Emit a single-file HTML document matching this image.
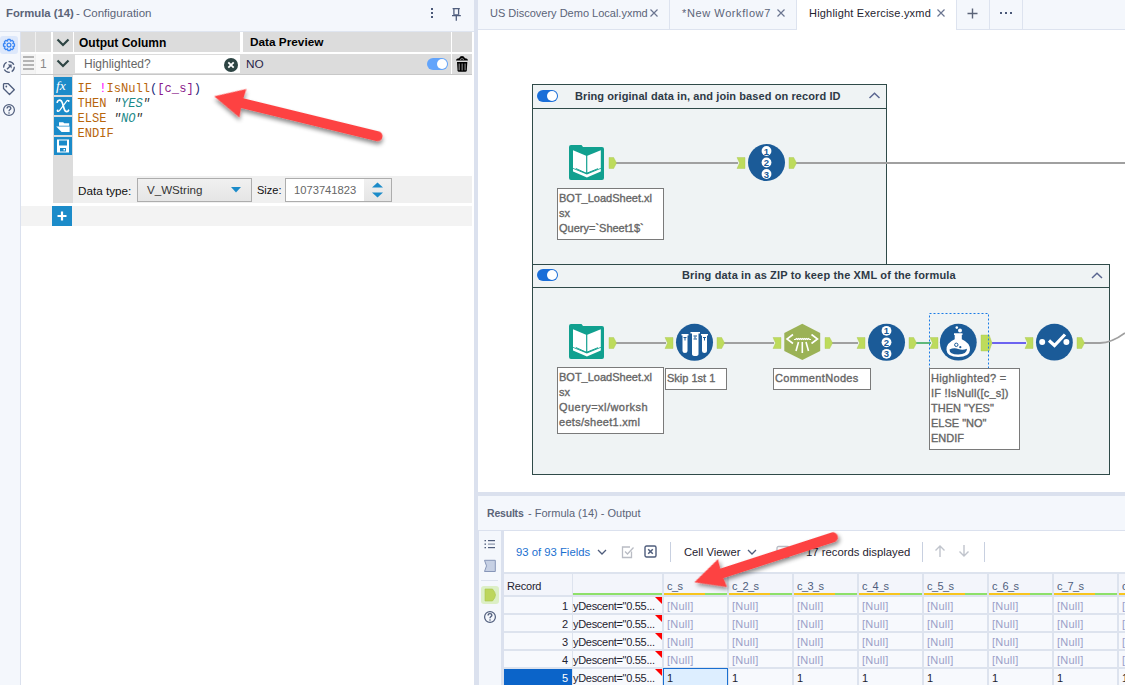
<!DOCTYPE html>
<html><head><meta charset="utf-8">
<style>
*{margin:0;padding:0;box-sizing:border-box}
html,body{width:1125px;height:685px;overflow:hidden;background:#fff}
body{position:relative;font-family:"Liberation Sans",sans-serif;color:#222}
.a{position:absolute}
.t{position:absolute;white-space:nowrap;line-height:1}
</style></head><body>
<div class="a" style="left:0px;top:0px;width:474px;height:685px;background:#f4f7fc;"></div>
<div class="t" style="left:6px;top:8px;font-size:11.3px;font-weight:bold;color:#5b6478;">Formula (14)</div>
<div class="t" style="left:76px;top:8px;font-size:11.5px;color:#5b6478;">- Configuration</div>
<div class="a" style="left:0px;top:31px;width:474px;height:1px;background:#dfe5f0;"></div>
<div class="a" style="left:20px;top:32px;width:1px;height:653px;background:#dbe1ee;"></div>
<div class="a" style="left:21px;top:32px;width:453px;height:653px;background:#fff;"></div>
<div class="a" style="left:431px;top:8px;width:2px;height:2px;background:#4a5878;"></div>
<div class="a" style="left:431px;top:12px;width:2px;height:2px;background:#4a5878;"></div>
<div class="a" style="left:431px;top:16px;width:2px;height:2px;background:#4a5878;"></div>
<svg class="a" style="left:450px;top:6px" width="14" height="16" viewBox="0 0 14 16"><g fill="none" stroke="#4f5d7c" stroke-width="1.3"><path d="M2.6 2.7H9.8M3.9 2.7V8.6M8.6 2.7V8.6M2 9.6H10.8M6.3 9.6V14.8"/></g><path d="M3.9 8.3L2 9.7H10.8L8.6 8.3Z" fill="#4f5d7c"/></svg>
<div class="a" style="left:0px;top:36px;width:18px;height:18px;background:#dde8fb;border-radius:3px"></div>
<svg class="a" style="left:2px;top:38px" width="14" height="14" viewBox="0 0 14 14"><path d="M10.83 5.29 L12.49 5.89 L12.49 8.11 L10.83 8.71 L10.92 8.50 L11.67 10.09 L10.09 11.67 L8.50 10.92 L8.71 10.83 L8.11 12.49 L5.89 12.49 L5.29 10.83 L5.50 10.92 L3.91 11.67 L2.33 10.09 L3.08 8.50 L3.17 8.71 L1.51 8.11 L1.51 5.89 L3.17 5.29 L3.08 5.50 L2.33 3.91 L3.91 2.33 L5.50 3.08 L5.29 3.17 L5.89 1.51 L8.11 1.51 L8.71 3.17 L8.50 3.08 L10.09 2.33 L11.67 3.91 L10.92 5.50Z" fill="none" stroke="#3a86f4" stroke-width="1.3" stroke-linejoin="round"/><circle cx="7" cy="7" r="1.9" fill="none" stroke="#3a86f4" stroke-width="1.3"/></svg>
<svg class="a" style="left:2px;top:60px" width="14" height="14" viewBox="0 0 14 14"><circle cx="7" cy="7" r="5.3" fill="none" stroke="#4f5d7c" stroke-width="1.3" stroke-dasharray="6.3 2" stroke-dashoffset="1"/><path d="M5 9.2L8.8 5.4" stroke="#4f5d7c" stroke-width="1.4"/><path d="M5.8 4.6H9.6V8.4Z" fill="#4f5d7c"/></svg>
<svg class="a" style="left:2px;top:82px" width="14" height="14" viewBox="0 0 14 14"><path d="M1.5 2.2V6.5L7.5 12.5L12.3 7.7L6.3 1.7H2Z" fill="none" stroke="#4f5d7c" stroke-width="1.3" stroke-linejoin="round"/><circle cx="4.3" cy="4.5" r="0.9" fill="#4f5d7c"/></svg>
<svg class="a" style="left:2px;top:103px" width="14" height="14" viewBox="0 0 14 14"><circle cx="7" cy="7" r="5.4" fill="none" stroke="#4f5d7c" stroke-width="1.2"/><path d="M5.1 5.4C5.1 4.2 6 3.6 7 3.6S8.9 4.2 8.9 5.3C8.9 6.5 7 6.7 7 8.2" fill="none" stroke="#4f5d7c" stroke-width="1.3"/><circle cx="7" cy="10" r="0.8" fill="#4f5d7c"/></svg>
<div class="a" style="left:21px;top:32px;width:451px;height:20px;background:#dcdcdc;"></div>
<svg class="a" style="left:55px;top:36px" width="16" height="12" viewBox="0 0 16 12"><path d="M2.5 3.5L8 9L13.5 3.5" fill="none" stroke="#2d4443" stroke-width="2.2"/></svg>
<div class="t" style="left:79px;top:37px;font-size:12px;font-weight:bold;color:#000;">Output Column</div>
<div class="t" style="left:250px;top:37px;font-size:11.8px;font-weight:bold;color:#000;">Data Preview</div>
<div class="a" style="left:21px;top:54px;width:451px;height:20px;background:#dcdcdc;"></div>
<div class="a" style="left:21px;top:74px;width:451px;height:1px;background:#c8c8c8;"></div>
<div class="a" style="left:21px;top:54px;width:14px;height:20px;background:#f4f4f4;"></div>
<div class="a" style="left:36px;top:54px;width:15px;height:20px;background:#f9f9f9;"></div>
<div class="a" style="left:35px;top:32px;width:1px;height:42px;background:#f0f0f0;"></div>
<div class="a" style="left:51px;top:32px;width:2px;height:42px;background:#fff;"></div>
<div class="a" style="left:73px;top:32px;width:1px;height:20px;background:#fff;"></div>
<div class="a" style="left:240px;top:32px;width:3px;height:20px;background:#fff;"></div>
<div class="a" style="left:451px;top:32px;width:1px;height:42px;background:#fff;"></div>
<div class="a" style="left:21px;top:52px;width:451px;height:2px;background:#fff;"></div>
<div class="a" style="left:23px;top:56px;width:11px;height:2px;background:#b4b4b4;"></div>
<div class="a" style="left:23px;top:60px;width:11px;height:2px;background:#b4b4b4;"></div>
<div class="a" style="left:23px;top:64px;width:11px;height:2px;background:#b4b4b4;"></div>
<div class="a" style="left:23px;top:68px;width:11px;height:2px;background:#b4b4b4;"></div>
<div class="t" style="left:40px;top:58px;font-size:12px;color:#888;">1</div>
<svg class="a" style="left:55px;top:57px" width="16" height="12" viewBox="0 0 16 12"><path d="M2.5 3.5L8 9L13.5 3.5" fill="none" stroke="#2d4443" stroke-width="2.2"/></svg>
<div class="a" style="left:75px;top:55px;width:165px;height:18px;background:#fff;"></div>
<div class="t" style="left:84px;top:58px;font-size:12px;color:#666;">Highlighted?</div>
<svg class="a" style="left:223px;top:57px" width="16" height="16" viewBox="0 0 16 16"><circle cx="8" cy="8" r="7" fill="#2d4443"/><path d="M5.3 5.3L10.7 10.7M10.7 5.3L5.3 10.7" stroke="#fff" stroke-width="1.8"/></svg>
<div class="t" style="left:246px;top:59px;font-size:11.8px;color:#2a1f4a;">NO</div>
<div class="a" style="left:427px;top:58px;width:21px;height:12px;background:#62a4fb;border-radius:6px"></div>
<div class="a" style="left:437px;top:59px;width:10px;height:10px;background:#fff;border-radius:50%"></div>
<svg class="a" style="left:455px;top:55px" width="14" height="18" viewBox="0 0 14 18"><path d="M1 5.6Q1 3.6 4 3.2Q5 1 7 1Q9 1 10 3.2Q13 3.6 13 5.6Z" fill="#000"/><path d="M5 4.6Q7 2.4 9 4.6" fill="none" stroke="#8a8a8a" stroke-width="1"/><path d="M2 7H12.3L11.8 15.6Q11.6 16.8 10.4 16.8H3.9Q2.7 16.8 2.5 15.6Z" fill="#000"/><path d="M4.2 8.5V15.2M7.15 8.5V15.5M10.1 8.5V15.2" stroke="#8a8a8a" stroke-width="1.1"/></svg>
<div class="a" style="left:53px;top:75px;width:20px;height:128px;background:#dcdcdc;"></div>
<div class="a" style="left:54px;top:77px;width:18px;height:18px;background:#1b8bc9;"></div>
<div class="a" style="left:54px;top:97px;width:18px;height:18px;background:#1b8bc9;"></div>
<div class="a" style="left:54px;top:117px;width:18px;height:18px;background:#1b8bc9;"></div>
<div class="a" style="left:54px;top:137px;width:18px;height:18px;background:#1b8bc9;"></div>
<div class="t" style="left:56px;top:79px;font-size:13.5px;color:#fff;font-family:'Liberation Serif',serif;font-style:italic">fx</div>
<svg class="a" style="left:54px;top:97px" width="18" height="18" viewBox="0 0 18 18"><path d="M3.2 5.2Q3.8 3 6 3.2Q7.6 3.5 8.4 6L10.3 12.2Q11 14.6 12.8 14.6Q14.2 14.5 14.6 13.2" fill="none" stroke="#fff" stroke-width="1.7" stroke-linecap="round"/><path d="M14.8 3.8Q13.8 3 12.8 3.8L5.5 13.6Q4.6 14.8 3.4 14.2" fill="none" stroke="#fff" stroke-width="1.2" stroke-linecap="round"/><circle cx="3.6" cy="13.6" r="1" fill="#fff"/><circle cx="14.6" cy="4" r="0.9" fill="#fff"/></svg>
<svg class="a" style="left:54px;top:117px" width="18" height="18" viewBox="0 0 18 18"><path d="M5 8.8V5.2H9.2L10.2 6.3H15.2V8.8Z" fill="#fff"/><path d="M2.2 9.6H15.6V15H7.6Z" fill="#fff"/></svg>
<svg class="a" style="left:54px;top:137px" width="18" height="18" viewBox="0 0 18 18"><path d="M3 2.5H15V15.5H3Z" fill="#fff"/><path d="M5 3.5H13V8.5H5Z" fill="#1b8bc9"/><path d="M6 11H12V14.5H6Z" fill="#1b8bc9"/><path d="M9.5 12H11V13.5H9.5Z" fill="#fff"/></svg>
<div class="t" style="left:77.5px;top:82px;font-family:'Liberation Mono',monospace;font-size:12.1px;line-height:15px;color:#b8650b">IF <span style="color:#f0f">!</span>IsNull<span style="color:#1c2a7c">(</span><span style="color:#8a1a8a">[c_s]</span><span style="color:#1c2a7c">)</span><br>THEN <i style="color:#1a8a8a"><span style="color:#333">"</span>YES<span style="color:#333">"</span></i><br>ELSE <i style="color:#1a8a8a"><span style="color:#333">"</span>NO<span style="color:#333">"</span></i><br>ENDIF</div>
<div class="a" style="left:73px;top:176px;width:399px;height:27px;background:#f0f0f0;"></div>
<div class="t" style="left:78px;top:185px;font-size:11.7px;color:#111;">Data type:</div>
<div class="a" style="left:137px;top:178px;width:115px;height:24px;background:linear-gradient(#f0f0f0,#e5e5e5);border:1px solid #adadad"></div>
<div class="t" style="left:147px;top:184px;font-size:11.6px;color:#333;">V_WString</div>
<svg class="a" style="left:231px;top:187px" width="10" height="6" viewBox="0 0 10 6"><path d="M0 0H10L5 5.5Z" fill="#1b8bc9"/></svg>
<div class="t" style="left:257px;top:185px;font-size:11px;color:#111;">Size:</div>
<div class="a" style="left:285px;top:178px;width:107px;height:24px;background:#fff;border:1px solid #adadad"></div>
<div class="a" style="left:364px;top:179px;width:27px;height:22px;background:linear-gradient(#f0f0f0,#e5e5e5);"></div>
<div class="t" style="left:294px;top:185px;font-size:11.2px;color:#666;">1073741823</div>
<svg class="a" style="left:371px;top:181px" width="13" height="18" viewBox="0 0 13 18"><path d="M6.5 1.5L12 6.5H1Z" fill="#1b8bc9"/><path d="M1 11.5H12L6.5 16.5Z" fill="#1b8bc9"/></svg>
<div class="a" style="left:21px;top:206px;width:451px;height:20px;background:#f3f3f3;"></div>
<div class="a" style="left:52px;top:206px;width:20px;height:20px;background:#1b8bc9;"></div>
<svg class="a" style="left:52px;top:206px" width="20" height="20" viewBox="0 0 20 20"><path d="M10 5.5V14.5M5.5 10H14.5" stroke="#fff" stroke-width="2.2"/></svg>
<div class="a" style="left:474px;top:0px;width:4px;height:685px;background:#dbe1ee;"></div>
<div class="a" style="left:478px;top:0px;width:647px;height:29px;background:#f4f7fc;"></div>
<div class="a" style="left:478px;top:29px;width:647px;height:1px;background:#dde3ef;"></div>
<div class="a" style="left:669px;top:0px;width:1px;height:29px;background:#dde3ef;"></div>
<div class="a" style="left:796px;top:0px;width:161px;height:30px;background:#fff;border-left:1px solid #dde3ef;border-right:1px solid #dde3ef"></div>
<div class="a" style="left:989px;top:0px;width:1px;height:29px;background:#dde3ef;"></div>
<div class="a" style="left:1022px;top:0px;width:1px;height:29px;background:#dde3ef;"></div>
<div class="t" style="left:490px;top:8px;font-size:11px;color:#5b6478;">US Discovery Demo Local.yxmd</div>
<div class="t" style="left:682px;top:8px;font-size:11px;letter-spacing:0.6px;color:#5b6478;">*New Workflow7</div>
<div class="t" style="left:809px;top:8px;font-size:11px;letter-spacing:0.2px;color:#1f2330;">Highlight Exercise.yxmd</div>
<svg class="a" style="left:650px;top:9px" width="8" height="8" viewBox="0 0 8 8"><path d="M0.5 0.5L7.5 7.5M7.5 0.5L0.5 7.5" stroke="#6a7590" stroke-width="1.2"/></svg>
<svg class="a" style="left:777px;top:9px" width="8" height="8" viewBox="0 0 8 8"><path d="M0.5 0.5L7.5 7.5M7.5 0.5L0.5 7.5" stroke="#6a7590" stroke-width="1.2"/></svg>
<svg class="a" style="left:937px;top:9px" width="8" height="8" viewBox="0 0 8 8"><path d="M0.5 0.5L7.5 7.5M7.5 0.5L0.5 7.5" stroke="#6a7590" stroke-width="1.2"/></svg>
<svg class="a" style="left:967px;top:8px" width="11" height="11" viewBox="0 0 11 11"><path d="M5.5 0.5V10.5M0.5 5.5H10.5" stroke="#5b6478" stroke-width="1.4"/></svg>
<div class="a" style="left:1000px;top:12px;width:2px;height:2px;background:#4a5878;"></div>
<div class="a" style="left:1005px;top:12px;width:2px;height:2px;background:#4a5878;"></div>
<div class="a" style="left:1010px;top:12px;width:2px;height:2px;background:#4a5878;"></div>
<div class="a" style="left:478px;top:30px;width:647px;height:462px;background:#fff;"></div>
<svg class="a" style="left:0;top:0" width="1125" height="685" viewBox="0 0 1125 685"><rect x="532.5" y="84.5" width="354" height="180" fill="#eff3f4" stroke="#2f4a48" stroke-width="1"/>
<path d="M532 108.5H887" stroke="#2f4a48" stroke-width="1"/>
<rect x="532.5" y="264.5" width="577" height="210" fill="#eff3f4" stroke="#2f4a48" stroke-width="1"/>
<path d="M532 287.5H1110" stroke="#2f4a48" stroke-width="1"/>
<path d="M869.5 98L874.5 93.3L879.5 98" fill="none" stroke="#5a6690" stroke-width="1.5"/>
<path d="M1092 278L1097 273.3L1102 278" fill="none" stroke="#5a6690" stroke-width="1.5"/>
<rect x="537" y="90" width="21" height="12" rx="6" fill="#1a6ed8"/>
<circle cx="552" cy="96" r="5" fill="#fff"/>
<rect x="537" y="269" width="21" height="12" rx="6" fill="#1a6ed8"/>
<circle cx="552" cy="275" r="5" fill="#fff"/>
<path d="M616 163H738" stroke="#a0a0a0" stroke-width="2"/>
<path d="M796 163H1125" stroke="#a0a0a0" stroke-width="2"/>
<path d="M616 343H666" stroke="#a0a0a0" stroke-width="2"/>
<path d="M724 343H774" stroke="#a0a0a0" stroke-width="2"/>
<path d="M832 343H858" stroke="#a0a0a0" stroke-width="2"/>
<path d="M916 343H931" stroke="#5fb87a" stroke-width="2"/>
<path d="M992 343H1026" stroke="#6c63f0" stroke-width="2.2"/>
<path d="M1084 343H1100C1110 343 1117 339 1125 333" fill="none" stroke="#a0a0a0" stroke-width="1.8"/>
<path d="M609 157.5H613.7L616.5 163.0L613.7 168.5H609Z" fill="#bddb5c" stroke="#a8c64c" stroke-width="0.4"/>
<path d="M737 157.5H745V168.5H737L739.5 163.0Z" fill="#bddb5c" stroke="#a8c64c" stroke-width="0.4"/>
<path d="M789 157.5H793.7L796.5 163.0L793.7 168.5H789Z" fill="#bddb5c" stroke="#a8c64c" stroke-width="0.4"/>
<path d="M609 337.5H613.7L616.5 343.0L613.7 348.5H609Z" fill="#bddb5c" stroke="#a8c64c" stroke-width="0.4"/>
<path d="M665 337.5H673V348.5H665L667.5 343.0Z" fill="#bddb5c" stroke="#a8c64c" stroke-width="0.4"/>
<path d="M717 337.5H721.7L724.5 343.0L721.7 348.5H717Z" fill="#bddb5c" stroke="#a8c64c" stroke-width="0.4"/>
<path d="M773 337.5H781V348.5H773L775.5 343.0Z" fill="#bddb5c" stroke="#a8c64c" stroke-width="0.4"/>
<path d="M825 337.5H829.7L832.5 343.0L829.7 348.5H825Z" fill="#bddb5c" stroke="#a8c64c" stroke-width="0.4"/>
<path d="M857 337.5H865V348.5H857L859.5 343.0Z" fill="#bddb5c" stroke="#a8c64c" stroke-width="0.4"/>
<path d="M909 337.5H913.7L916.5 343.0L913.7 348.5H909Z" fill="#bddb5c" stroke="#a8c64c" stroke-width="0.4"/>
<path d="M930 337.5H938V348.5H930L932.5 343.0Z" fill="#bddb5c" stroke="#a8c64c" stroke-width="0.4"/>
<path d="M981 335H989.2L992 343.0L989.2 351H981Z" fill="#bddb5c" stroke="#a8c64c" stroke-width="0.4"/>
<path d="M1025 337.5H1033V348.5H1025L1027.5 343.0Z" fill="#bddb5c" stroke="#a8c64c" stroke-width="0.4"/>
<path d="M1077 337.5H1081.7L1084.5 343.0L1081.7 348.5H1077Z" fill="#bddb5c" stroke="#a8c64c" stroke-width="0.4"/>
<g transform="translate(569,145)"><path d="M0 2Q0 0 2 0H12.5L14 2H33Q35 2 35 4V33Q35 35 33 35H2Q0 35 0 33Z" fill="#11a08f"/>
<path d="M4 5.2L17.1 10.8V28L4 23Z" fill="#fff"/><path d="M18.3 10.8L31.8 5.2V23L18.3 28Z" fill="#fff"/>
<path d="M4 26.6L17.9 32.4L31.8 26.6V23.8L17.9 29.6L4 23.8Z" fill="#fff"/>
<path d="M6.8 23.5L17.5 28.3L29 23.7" fill="none" stroke="#11a08f" stroke-width="1"/></g>
<g transform="translate(569,324)"><path d="M0 2Q0 0 2 0H12.5L14 2H33Q35 2 35 4V33Q35 35 33 35H2Q0 35 0 33Z" fill="#11a08f"/>
<path d="M4 5.2L17.1 10.8V28L4 23Z" fill="#fff"/><path d="M18.3 10.8L31.8 5.2V23L18.3 28Z" fill="#fff"/>
<path d="M4 26.6L17.9 32.4L31.8 26.6V23.8L17.9 29.6L4 23.8Z" fill="#fff"/>
<path d="M6.8 23.5L17.5 28.3L29 23.7" fill="none" stroke="#11a08f" stroke-width="1"/></g>
<circle cx="766.5" cy="162.5" r="18.5" fill="#1b5b98"/><circle cx="766.5" cy="151.0" r="4.9" fill="#fff"/><text x="766.5" y="154.5" font-family="Liberation Sans" font-size="9.5" font-weight="bold" fill="#1b5b98" text-anchor="middle">1</text><circle cx="766.5" cy="162.5" r="4.9" fill="#fff"/><text x="766.5" y="166.0" font-family="Liberation Sans" font-size="9.5" font-weight="bold" fill="#1b5b98" text-anchor="middle">2</text><circle cx="766.5" cy="174.0" r="4.9" fill="#fff"/><text x="766.5" y="177.5" font-family="Liberation Sans" font-size="9.5" font-weight="bold" fill="#1b5b98" text-anchor="middle">3</text>
<circle cx="886.5" cy="342.3" r="18.5" fill="#1b5b98"/><circle cx="886.5" cy="330.8" r="4.9" fill="#fff"/><text x="886.5" y="334.3" font-family="Liberation Sans" font-size="9.5" font-weight="bold" fill="#1b5b98" text-anchor="middle">1</text><circle cx="886.5" cy="342.3" r="4.9" fill="#fff"/><text x="886.5" y="345.8" font-family="Liberation Sans" font-size="9.5" font-weight="bold" fill="#1b5b98" text-anchor="middle">2</text><circle cx="886.5" cy="353.8" r="4.9" fill="#fff"/><text x="886.5" y="357.3" font-family="Liberation Sans" font-size="9.5" font-weight="bold" fill="#1b5b98" text-anchor="middle">3</text>
<circle cx="694.5" cy="342.3" r="18.5" fill="#1b5b98"/>
<g fill="#fff"><path d="M681.5 334H688.5V335.5H687.5V351Q687.5 353 685 353Q682.5 353 682.5 351V335.5H681.5Z"/>
<path d="M690.5 332H700V333.5H698.5V354Q698.5 356 695.3 356Q692 356 692 354V333.5H690.5Z"/>
<path d="M701 334H708V335.5H707V351Q707 353 704.5 353Q702 353 702 351V335.5H701Z"/></g>
<g fill="#1b5b98"><rect x="683.5" y="337" width="3" height="1"/><rect x="684.5" y="338" width="1" height="2.5"/><rect x="693.5" y="335.5" width="3.5" height="1"/><rect x="694.5" y="336.5" width="1" height="2"/><rect x="693.5" y="338.5" width="3.5" height="1"/><rect x="703" y="337" width="3" height="1"/><rect x="704" y="338" width="1" height="2.5"/></g>
<path d="M802.3 323.7L820.2 333V351L802.3 360L784.3 351V333Z" fill="#9bb256"/>
<g fill="none" stroke="#fff" stroke-width="1.6"><path d="M793 334.5L787 339L793 343.5M811.5 334.5L817.5 339L811.5 343.5"/>
<path d="M798.5 342L796 351M802.3 342V353M806 342L808.5 351"/></g>
<path d="M794 339.5h1.5l1 -1 1 1 1 -1 1 1 1 -1 1 1 1 -1 1 1 1 -1 1 1 1 -1 1 1 1 -1 1 1h1.5" fill="none" stroke="#fff" stroke-width="1.2"/>
<circle cx="958.3" cy="342.2" r="18.4" fill="#1b5b98"/>
<path d="M954 333.2H962.5V335H961.8V339.2Q970.5 343 970 350Q969.5 357 958.2 357Q947 357 946.5 350Q946 343 954.7 339.2V335H954Z" fill="#fff"/>
<path d="M949.5 349.5Q954 347.5 958.2 349Q962.5 350.5 967 348.8Q967 354.5 958.2 354.5Q949.3 354.5 949.5 349.5Z" fill="#1b5b98"/>
<circle cx="956.3" cy="344.8" r="1.7" fill="none" stroke="#1b5b98" stroke-width="1"/><circle cx="960.3" cy="347.2" r="1.1" fill="#1b5b98"/>
<circle cx="960" cy="330.5" r="2" fill="#fff"/><circle cx="956.8" cy="327.6" r="1.3" fill="#fff"/>
<circle cx="1054.4" cy="342.2" r="18.4" fill="#1b5b98"/>
<circle cx="1042.2" cy="342" r="3" fill="#fff"/><circle cx="1066.4" cy="342" r="3" fill="#fff"/>
<path d="M1049 340.5L1054.5 345.5L1065 334.5" fill="none" stroke="#fff" stroke-width="3.2"/>
<rect x="929.5" y="313.5" width="59" height="55" fill="none" stroke="#1a7be6" stroke-width="1" stroke-dasharray="2 2"/></svg>
<div class="t" style="left:575px;top:91px;font-size:11px;font-weight:bold;letter-spacing:0.09px;color:#2e3a46;">Bring original data in, and join based on record ID</div>
<div class="t" style="left:682px;top:270px;font-size:11px;font-weight:bold;letter-spacing:0.15px;color:#2e3a46;">Bring data in as ZIP to keep the XML of the formula</div>
<div class="a" style="left:557px;top:188px;width:107px;height:52px;background:#fff;border:1px solid #7a7a7a"></div><div class="t" style="left:559px;top:191px;font-size:11px;line-height:15px;color:#666;-webkit-text-stroke:0.35px #666">BOT_LoadSheet.xl<br>sx<br>Query=`Sheet1$`</div>
<div class="a" style="left:557px;top:367px;width:107px;height:67px;background:#fff;border:1px solid #7a7a7a"></div><div class="t" style="left:559px;top:370px;font-size:11px;line-height:15px;color:#666;-webkit-text-stroke:0.35px #666">BOT_LoadSheet.xl<br>sx<br><span style="letter-spacing:0.45px">Query=xl/worksh</span><br><span style="letter-spacing:0.28px">eets/sheet1.xml</span></div>
<div class="a" style="left:665px;top:368px;width:62px;height:22px;background:#fff;border:1px solid #7a7a7a"></div><div class="t" style="left:667px;top:371px;font-size:11px;line-height:15px;color:#666;-webkit-text-stroke:0.35px #666">Skip 1st 1</div>
<div class="a" style="left:773px;top:368px;width:98px;height:22px;background:#fff;border:1px solid #7a7a7a"></div><div class="t" style="left:775px;top:371px;font-size:11px;line-height:15px;color:#666;-webkit-text-stroke:0.35px #666"><span style="letter-spacing:0.35px">CommentNodes</span></div>
<div class="a" style="left:929px;top:368px;width:91px;height:82px;background:#fff;border:1px solid #7a7a7a"></div><div class="t" style="left:931px;top:371px;font-size:11px;line-height:15px;color:#666;-webkit-text-stroke:0.35px #666"><span style="letter-spacing:0.35px">Highlighted? =</span><br><span style="letter-spacing:0.22px">IF !IsNull([c_s])</span><br>THEN "YES"<br>ELSE "NO"<br>ENDIF</div>
<div class="a" style="left:478px;top:492px;width:647px;height:4px;background:#dbe1ee;"></div>
<div class="a" style="left:478px;top:496px;width:647px;height:35px;background:#f4f7fc;"></div>
<div class="a" style="left:478px;top:530px;width:647px;height:1px;background:#dbe1ee;"></div>
<div class="t" style="left:487px;top:508px;font-size:10.5px;font-weight:bold;letter-spacing:-0.2px;color:#5b6478;">Results</div>
<div class="t" style="left:528px;top:508px;font-size:11px;color:#5b6478;">- Formula (14) - Output</div>
<div class="a" style="left:478px;top:531px;width:23px;height:154px;background:#f4f7fc;"></div>
<div class="a" style="left:478px;top:531px;width:1px;height:154px;background:#dbe1ee;"></div>
<div class="a" style="left:501px;top:531px;width:3px;height:154px;background:#dbe1ee;"></div>
<svg class="a" style="left:483px;top:537px" width="14" height="14" viewBox="0 0 14 14"><g fill="#4f5d7c"><rect x="1.5" y="3" width="1.5" height="1.3"/><rect x="1.5" y="6.5" width="1.5" height="1.3"/><rect x="1.5" y="10" width="1.5" height="1.3"/><rect x="5" y="3" width="7" height="1.2"/><rect x="5" y="6.5" width="7" height="1.2" fill="#8a94aa"/><rect x="5" y="10" width="7" height="1.2"/></g></svg>
<svg class="a" style="left:483px;top:559px" width="14" height="14" viewBox="0 0 14 14"><path d="M1.5 1.3H12.3V12.5H1.5L3.5 6.9Z" fill="#c6d0e4" stroke="#8796b8" stroke-width="1"/></svg>
<div class="a" style="left:481px;top:580px;width:17px;height:1px;background:#dde3ee;"></div>
<div class="a" style="left:481px;top:586px;width:18px;height:18px;background:#dcefc6;border-radius:3px"></div>
<svg class="a" style="left:484px;top:588px" width="13" height="14" viewBox="0 0 13 14"><path d="M1 1H8.5Q11.5 4.5 11.5 7Q11.5 9.5 8.5 13H1Z" fill="#bcd65c" stroke="#a9c44a" stroke-width="0.6"/></svg>
<svg class="a" style="left:483px;top:610px" width="14" height="14" viewBox="0 0 14 14"><circle cx="7" cy="7" r="5.4" fill="none" stroke="#4f5d7c" stroke-width="1.2"/><path d="M5.1 5.4C5.1 4.2 6 3.6 7 3.6S8.9 4.2 8.9 5.3C8.9 6.5 7 6.7 7 8.2" fill="none" stroke="#4f5d7c" stroke-width="1.3"/><circle cx="7" cy="10" r="0.8" fill="#4f5d7c"/></svg>
<div class="a" style="left:504px;top:531px;width:621px;height:41px;background:#fff;"></div>
<div class="a" style="left:504px;top:572px;width:621px;height:2px;background:#dde3ee;"></div>
<div class="t" style="left:516px;top:547px;font-size:11.3px;color:#1a6fd0;">93 of 93 Fields</div>
<svg class="a" style="left:597px;top:548px" width="10" height="8" viewBox="0 0 10 8"><path d="M1 2L5 6L9 2" fill="none" stroke="#4f5d7c" stroke-width="1.3"/></svg>
<svg class="a" style="left:621px;top:545px" width="14" height="14" viewBox="0 0 14 14"><path d="M10.5 6.5V12.5H1.5V2H9" fill="none" stroke="#b9bcc4" stroke-width="1.3"/><path d="M4 6.5L6.5 9L12.5 2.5" fill="none" stroke="#b9bcc4" stroke-width="1.3"/></svg>
<svg class="a" style="left:644px;top:545px" width="13" height="13" viewBox="0 0 13 13"><rect x="1" y="1" width="11" height="11" rx="1.5" fill="none" stroke="#4f5d7c" stroke-width="1.4"/><path d="M4.2 4.2L8.8 8.8M8.8 4.2L4.2 8.8" stroke="#4f5d7c" stroke-width="1.5"/></svg>
<div class="a" style="left:670px;top:542px;width:1px;height:20px;background:#c8d0e0;"></div>
<div class="t" style="left:684px;top:547px;font-size:11.2px;color:#1f2330;">Cell Viewer</div>
<svg class="a" style="left:747px;top:548px" width="10" height="8" viewBox="0 0 10 8"><path d="M1 2L5 6L9 2" fill="none" stroke="#4f5d7c" stroke-width="1.3"/></svg>
<svg class="a" style="left:776px;top:545px" width="14" height="14" viewBox="0 0 14 14"><rect x="1" y="1.5" width="12" height="11" rx="1.5" fill="none" stroke="#b9bcc4" stroke-width="1.3"/></svg>
<div class="t" style="left:806px;top:547px;font-size:11.3px;color:#1f2330;">17 records displayed</div>
<div class="a" style="left:922px;top:542px;width:1px;height:20px;background:#c8d0e0;"></div>
<svg class="a" style="left:934px;top:544px" width="12" height="14" viewBox="0 0 12 14"><path d="M6 13V2M1.5 6.5L6 2L10.5 6.5" fill="none" stroke="#c0c4cc" stroke-width="1.4"/></svg>
<svg class="a" style="left:958px;top:544px" width="12" height="14" viewBox="0 0 12 14"><path d="M6 1V12M1.5 7.5L6 12L10.5 7.5" fill="none" stroke="#c0c4cc" stroke-width="1.4"/></svg>
<div class="a" style="left:984px;top:542px;width:1px;height:20px;background:#c8d0e0;"></div>
<div class="a" style="left:504px;top:574px;width:621px;height:111px;background:#dde3ee;"></div>
<div class="a" style="left:504px;top:574px;width:68px;height:19px;background:#f3f5fb;"></div>
<div class="a" style="left:504px;top:593px;width:68px;height:2px;background:#f3f5fb;"></div>
<div class="t" style="left:507px;top:581px;font-size:11px;letter-spacing:-0.2px;color:#1f2330;">Record</div>
<div class="a" style="left:504px;top:597px;width:68px;height:16px;background:#f7f9fd;"></div>
<div class="t" style="left:504px;width:64px;text-align:right;top:601px;font-size:11px;color:#1f2330">1</div>
<div class="a" style="left:504px;top:615px;width:68px;height:16px;background:#f7f9fd;"></div>
<div class="t" style="left:504px;width:64px;text-align:right;top:619px;font-size:11px;color:#1f2330">2</div>
<div class="a" style="left:504px;top:633px;width:68px;height:16px;background:#f7f9fd;"></div>
<div class="t" style="left:504px;width:64px;text-align:right;top:637px;font-size:11px;color:#1f2330">3</div>
<div class="a" style="left:504px;top:651px;width:68px;height:16px;background:#f7f9fd;"></div>
<div class="t" style="left:504px;width:64px;text-align:right;top:655px;font-size:11px;color:#1f2330">4</div>
<div class="a" style="left:504px;top:669px;width:68px;height:18px;background:#0b64c9;"></div>
<div class="t" style="left:504px;width:64px;text-align:right;top:673px;font-size:11px;color:#fff">5</div>
<div class="a" style="left:573px;top:574px;width:89px;height:19px;background:#f3f5fb;"></div>
<div class="a" style="left:573px;top:593px;width:89px;height:2px;background:#8ee06a;"></div>
<div class="a" style="left:573px;top:597px;width:89px;height:16px;background:#f7f9fd;"></div>
<div class="t" style="left:573px;top:601px;font-size:11px;letter-spacing:-0.3px;color:#1f2330;">yDescent="0.55...</div>
<svg class="a" style="left:655px;top:597px" width="7" height="7" viewBox="0 0 7 7"><path d="M0 0H7V7Z" fill="#f00"/></svg>
<div class="a" style="left:573px;top:615px;width:89px;height:16px;background:#f7f9fd;"></div>
<div class="t" style="left:573px;top:619px;font-size:11px;letter-spacing:-0.3px;color:#1f2330;">yDescent="0.55...</div>
<svg class="a" style="left:655px;top:615px" width="7" height="7" viewBox="0 0 7 7"><path d="M0 0H7V7Z" fill="#f00"/></svg>
<div class="a" style="left:573px;top:633px;width:89px;height:16px;background:#f7f9fd;"></div>
<div class="t" style="left:573px;top:637px;font-size:11px;letter-spacing:-0.3px;color:#1f2330;">yDescent="0.55...</div>
<svg class="a" style="left:655px;top:633px" width="7" height="7" viewBox="0 0 7 7"><path d="M0 0H7V7Z" fill="#f00"/></svg>
<div class="a" style="left:573px;top:651px;width:89px;height:16px;background:#f7f9fd;"></div>
<div class="t" style="left:573px;top:655px;font-size:11px;letter-spacing:-0.3px;color:#1f2330;">yDescent="0.55...</div>
<svg class="a" style="left:655px;top:651px" width="7" height="7" viewBox="0 0 7 7"><path d="M0 0H7V7Z" fill="#f00"/></svg>
<div class="a" style="left:573px;top:669px;width:89px;height:18px;background:#f7f9fd;"></div>
<div class="t" style="left:573px;top:673px;font-size:11px;letter-spacing:-0.3px;color:#1f2330;">yDescent="0.55...</div>
<svg class="a" style="left:655px;top:669px" width="7" height="7" viewBox="0 0 7 7"><path d="M0 0H7V7Z" fill="#f00"/></svg>
<div class="a" style="left:664px;top:574px;width:63px;height:19px;background:#f3f5fb;"></div>
<div class="a" style="left:664px;top:593px;width:63px;height:2px;background:#8ee06a;"></div>
<div class="a" style="left:664px;top:593px;width:41px;height:2px;background:#f7c51e;"></div>
<div class="t" style="left:667px;top:581px;font-size:11px;letter-spacing:-0.6px;color:#4f5d7c;">c_s</div>
<div class="a" style="left:664px;top:597px;width:63px;height:16px;background:#f7f9fd;"></div>
<div class="t" style="left:667px;top:601px;font-size:11px;letter-spacing:0.25px;color:#9b9fc8;">[Null]</div>
<div class="a" style="left:664px;top:615px;width:63px;height:16px;background:#f7f9fd;"></div>
<div class="t" style="left:667px;top:619px;font-size:11px;letter-spacing:0.25px;color:#9b9fc8;">[Null]</div>
<div class="a" style="left:664px;top:633px;width:63px;height:16px;background:#f7f9fd;"></div>
<div class="t" style="left:667px;top:637px;font-size:11px;letter-spacing:0.25px;color:#9b9fc8;">[Null]</div>
<div class="a" style="left:664px;top:651px;width:63px;height:16px;background:#f7f9fd;"></div>
<div class="t" style="left:667px;top:655px;font-size:11px;letter-spacing:0.25px;color:#9b9fc8;">[Null]</div>
<div class="a" style="left:664px;top:669px;width:63px;height:18px;background:#ddeeff;"></div>
<div class="t" style="left:667px;top:673px;font-size:11px;color:#1f2330;">1</div>
<div class="a" style="left:729px;top:574px;width:63px;height:19px;background:#f3f5fb;"></div>
<div class="a" style="left:729px;top:593px;width:63px;height:2px;background:#8ee06a;"></div>
<div class="a" style="left:729px;top:593px;width:41px;height:2px;background:#f7c51e;"></div>
<div class="t" style="left:732px;top:581px;font-size:11px;letter-spacing:-0.6px;color:#4f5d7c;">c_2_s</div>
<div class="a" style="left:729px;top:597px;width:63px;height:16px;background:#f7f9fd;"></div>
<div class="t" style="left:732px;top:601px;font-size:11px;letter-spacing:0.25px;color:#9b9fc8;">[Null]</div>
<div class="a" style="left:729px;top:615px;width:63px;height:16px;background:#f7f9fd;"></div>
<div class="t" style="left:732px;top:619px;font-size:11px;letter-spacing:0.25px;color:#9b9fc8;">[Null]</div>
<div class="a" style="left:729px;top:633px;width:63px;height:16px;background:#f7f9fd;"></div>
<div class="t" style="left:732px;top:637px;font-size:11px;letter-spacing:0.25px;color:#9b9fc8;">[Null]</div>
<div class="a" style="left:729px;top:651px;width:63px;height:16px;background:#f7f9fd;"></div>
<div class="t" style="left:732px;top:655px;font-size:11px;letter-spacing:0.25px;color:#9b9fc8;">[Null]</div>
<div class="a" style="left:729px;top:669px;width:63px;height:18px;background:#f7f9fd;"></div>
<div class="t" style="left:732px;top:673px;font-size:11px;color:#1f2330;">1</div>
<div class="a" style="left:794px;top:574px;width:63px;height:19px;background:#f3f5fb;"></div>
<div class="a" style="left:794px;top:593px;width:63px;height:2px;background:#8ee06a;"></div>
<div class="a" style="left:794px;top:593px;width:41px;height:2px;background:#f7c51e;"></div>
<div class="t" style="left:797px;top:581px;font-size:11px;letter-spacing:-0.6px;color:#4f5d7c;">c_3_s</div>
<div class="a" style="left:794px;top:597px;width:63px;height:16px;background:#f7f9fd;"></div>
<div class="t" style="left:797px;top:601px;font-size:11px;letter-spacing:0.25px;color:#9b9fc8;">[Null]</div>
<div class="a" style="left:794px;top:615px;width:63px;height:16px;background:#f7f9fd;"></div>
<div class="t" style="left:797px;top:619px;font-size:11px;letter-spacing:0.25px;color:#9b9fc8;">[Null]</div>
<div class="a" style="left:794px;top:633px;width:63px;height:16px;background:#f7f9fd;"></div>
<div class="t" style="left:797px;top:637px;font-size:11px;letter-spacing:0.25px;color:#9b9fc8;">[Null]</div>
<div class="a" style="left:794px;top:651px;width:63px;height:16px;background:#f7f9fd;"></div>
<div class="t" style="left:797px;top:655px;font-size:11px;letter-spacing:0.25px;color:#9b9fc8;">[Null]</div>
<div class="a" style="left:794px;top:669px;width:63px;height:18px;background:#f7f9fd;"></div>
<div class="t" style="left:797px;top:673px;font-size:11px;color:#1f2330;">1</div>
<div class="a" style="left:859px;top:574px;width:63px;height:19px;background:#f3f5fb;"></div>
<div class="a" style="left:859px;top:593px;width:63px;height:2px;background:#8ee06a;"></div>
<div class="a" style="left:859px;top:593px;width:41px;height:2px;background:#f7c51e;"></div>
<div class="t" style="left:862px;top:581px;font-size:11px;letter-spacing:-0.6px;color:#4f5d7c;">c_4_s</div>
<div class="a" style="left:859px;top:597px;width:63px;height:16px;background:#f7f9fd;"></div>
<div class="t" style="left:862px;top:601px;font-size:11px;letter-spacing:0.25px;color:#9b9fc8;">[Null]</div>
<div class="a" style="left:859px;top:615px;width:63px;height:16px;background:#f7f9fd;"></div>
<div class="t" style="left:862px;top:619px;font-size:11px;letter-spacing:0.25px;color:#9b9fc8;">[Null]</div>
<div class="a" style="left:859px;top:633px;width:63px;height:16px;background:#f7f9fd;"></div>
<div class="t" style="left:862px;top:637px;font-size:11px;letter-spacing:0.25px;color:#9b9fc8;">[Null]</div>
<div class="a" style="left:859px;top:651px;width:63px;height:16px;background:#f7f9fd;"></div>
<div class="t" style="left:862px;top:655px;font-size:11px;letter-spacing:0.25px;color:#9b9fc8;">[Null]</div>
<div class="a" style="left:859px;top:669px;width:63px;height:18px;background:#f7f9fd;"></div>
<div class="t" style="left:862px;top:673px;font-size:11px;color:#1f2330;">1</div>
<div class="a" style="left:924px;top:574px;width:63px;height:19px;background:#f3f5fb;"></div>
<div class="a" style="left:924px;top:593px;width:63px;height:2px;background:#8ee06a;"></div>
<div class="a" style="left:924px;top:593px;width:41px;height:2px;background:#f7c51e;"></div>
<div class="t" style="left:927px;top:581px;font-size:11px;letter-spacing:-0.6px;color:#4f5d7c;">c_5_s</div>
<div class="a" style="left:924px;top:597px;width:63px;height:16px;background:#f7f9fd;"></div>
<div class="t" style="left:927px;top:601px;font-size:11px;letter-spacing:0.25px;color:#9b9fc8;">[Null]</div>
<div class="a" style="left:924px;top:615px;width:63px;height:16px;background:#f7f9fd;"></div>
<div class="t" style="left:927px;top:619px;font-size:11px;letter-spacing:0.25px;color:#9b9fc8;">[Null]</div>
<div class="a" style="left:924px;top:633px;width:63px;height:16px;background:#f7f9fd;"></div>
<div class="t" style="left:927px;top:637px;font-size:11px;letter-spacing:0.25px;color:#9b9fc8;">[Null]</div>
<div class="a" style="left:924px;top:651px;width:63px;height:16px;background:#f7f9fd;"></div>
<div class="t" style="left:927px;top:655px;font-size:11px;letter-spacing:0.25px;color:#9b9fc8;">[Null]</div>
<div class="a" style="left:924px;top:669px;width:63px;height:18px;background:#f7f9fd;"></div>
<div class="t" style="left:927px;top:673px;font-size:11px;color:#1f2330;">1</div>
<div class="a" style="left:989px;top:574px;width:63px;height:19px;background:#f3f5fb;"></div>
<div class="a" style="left:989px;top:593px;width:63px;height:2px;background:#8ee06a;"></div>
<div class="a" style="left:989px;top:593px;width:41px;height:2px;background:#f7c51e;"></div>
<div class="t" style="left:992px;top:581px;font-size:11px;letter-spacing:-0.6px;color:#4f5d7c;">c_6_s</div>
<div class="a" style="left:989px;top:597px;width:63px;height:16px;background:#f7f9fd;"></div>
<div class="t" style="left:992px;top:601px;font-size:11px;letter-spacing:0.25px;color:#9b9fc8;">[Null]</div>
<div class="a" style="left:989px;top:615px;width:63px;height:16px;background:#f7f9fd;"></div>
<div class="t" style="left:992px;top:619px;font-size:11px;letter-spacing:0.25px;color:#9b9fc8;">[Null]</div>
<div class="a" style="left:989px;top:633px;width:63px;height:16px;background:#f7f9fd;"></div>
<div class="t" style="left:992px;top:637px;font-size:11px;letter-spacing:0.25px;color:#9b9fc8;">[Null]</div>
<div class="a" style="left:989px;top:651px;width:63px;height:16px;background:#f7f9fd;"></div>
<div class="t" style="left:992px;top:655px;font-size:11px;letter-spacing:0.25px;color:#9b9fc8;">[Null]</div>
<div class="a" style="left:989px;top:669px;width:63px;height:18px;background:#f7f9fd;"></div>
<div class="t" style="left:992px;top:673px;font-size:11px;color:#1f2330;">1</div>
<div class="a" style="left:1054px;top:574px;width:63px;height:19px;background:#f3f5fb;"></div>
<div class="a" style="left:1054px;top:593px;width:63px;height:2px;background:#8ee06a;"></div>
<div class="a" style="left:1054px;top:593px;width:41px;height:2px;background:#f7c51e;"></div>
<div class="t" style="left:1057px;top:581px;font-size:11px;letter-spacing:-0.6px;color:#4f5d7c;">c_7_s</div>
<div class="a" style="left:1054px;top:597px;width:63px;height:16px;background:#f7f9fd;"></div>
<div class="t" style="left:1057px;top:601px;font-size:11px;letter-spacing:0.25px;color:#9b9fc8;">[Null]</div>
<div class="a" style="left:1054px;top:615px;width:63px;height:16px;background:#f7f9fd;"></div>
<div class="t" style="left:1057px;top:619px;font-size:11px;letter-spacing:0.25px;color:#9b9fc8;">[Null]</div>
<div class="a" style="left:1054px;top:633px;width:63px;height:16px;background:#f7f9fd;"></div>
<div class="t" style="left:1057px;top:637px;font-size:11px;letter-spacing:0.25px;color:#9b9fc8;">[Null]</div>
<div class="a" style="left:1054px;top:651px;width:63px;height:16px;background:#f7f9fd;"></div>
<div class="t" style="left:1057px;top:655px;font-size:11px;letter-spacing:0.25px;color:#9b9fc8;">[Null]</div>
<div class="a" style="left:1054px;top:669px;width:63px;height:18px;background:#f7f9fd;"></div>
<div class="t" style="left:1057px;top:673px;font-size:11px;color:#1f2330;">1</div>
<div class="a" style="left:1119px;top:574px;width:6px;height:19px;background:#f3f5fb;"></div>
<div class="a" style="left:1119px;top:593px;width:6px;height:2px;background:#8ee06a;"></div>
<div class="a" style="left:1119px;top:593px;width:41px;height:2px;background:#f7c51e;"></div>
<div class="t" style="left:1122px;top:581px;font-size:11px;letter-spacing:-0.6px;color:#4f5d7c;">c_8_s</div>
<div class="a" style="left:1119px;top:597px;width:6px;height:16px;background:#f7f9fd;"></div>
<div class="t" style="left:1122px;top:601px;font-size:11px;letter-spacing:0.25px;color:#9b9fc8;">[Null]</div>
<div class="a" style="left:1119px;top:615px;width:6px;height:16px;background:#f7f9fd;"></div>
<div class="t" style="left:1122px;top:619px;font-size:11px;letter-spacing:0.25px;color:#9b9fc8;">[Null]</div>
<div class="a" style="left:1119px;top:633px;width:6px;height:16px;background:#f7f9fd;"></div>
<div class="t" style="left:1122px;top:637px;font-size:11px;letter-spacing:0.25px;color:#9b9fc8;">[Null]</div>
<div class="a" style="left:1119px;top:651px;width:6px;height:16px;background:#f7f9fd;"></div>
<div class="t" style="left:1122px;top:655px;font-size:11px;letter-spacing:0.25px;color:#9b9fc8;">[Null]</div>
<div class="a" style="left:1119px;top:669px;width:6px;height:18px;background:#f7f9fd;"></div>
<div class="t" style="left:1122px;top:673px;font-size:11px;color:#1f2330;">1</div>
<div class="a" style="left:663px;top:668px;width:65px;height:18px;background:transparent;border:1px solid #1a6fd0"></div>
<svg class="a" style="left:0;top:0" width="1125" height="685" viewBox="0 0 1125 685"><defs><filter id="sh" x="-20%" y="-50%" width="140%" height="200%"><feGaussianBlur in="SourceAlpha" stdDeviation="2"/><feOffset dx="1" dy="3" result="b"/><feFlood flood-color="#000" flood-opacity="0.45"/><feComposite in2="b" operator="in"/><feMerge><feMergeNode/><feMergeNode in="SourceGraphic"/></feMerge></filter></defs><g transform="translate(214.20,96.30) rotate(13.74)" filter="url(#sh)"><path d="M0 0L29.6 -14.8L28.8 -4.9H168.2A4.9 4.9 0 0 1 168.2 4.9H28.8L29.6 14.6Z" fill="#fd4343"/></g><g transform="translate(694.40,582.30) rotate(-17.99)" filter="url(#sh)"><path d="M0 0L29.6 -14.8L28.8 -4.9H145.7A4.9 4.9 0 0 1 145.7 4.9H28.8L29.6 14.6Z" fill="#fd4343"/></g></svg>
</body></html>
